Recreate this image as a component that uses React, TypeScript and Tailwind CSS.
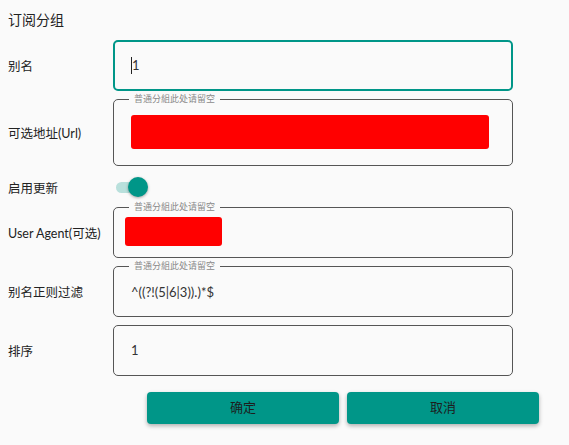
const font = { fontFamily: 'Lato, "Noto Sans CJK SC", sans-serif' };

const Legend = () => (
  <legend className="ml-[15px] px-[5px] text-[9px] leading-[10px] text-[#8a8a8a]">普通分組此处请留空</legend>
);

const Label: React.FC<{ text: string; shift?: boolean }> = ({ text, shift }) => (
  <div className={`w-[105px] shrink-0 text-[12.5px] text-[#222] ${shift ? "pt-[9px]" : "pt-[4px]"}`}>{text}</div>
);

export default function App() {
  return (
    <div className="min-h-[445px] w-[569px] bg-[#fafafa] px-2" style={font}>
      <div className="flex h-[38px] items-center text-[14px] text-[#222]">订阅分组</div>

      {/* 别名 */}
      <div className="mt-[2px] flex items-center">
        <Label text="别名" />
        <div className="flex h-[51px] w-[400px] items-center rounded-[5px] border-2 border-[#009688] pl-[16px] text-[13px] text-[#333]">
          <span className="inline-block h-[17px] border-l border-[#222]"></span>
          <span>1</span>
        </div>
      </div>

      {/* url */}
      <div className="mt-[3px] flex items-center">
        <Label text="可选地址(Url)" shift />
        <fieldset className="w-[400px] rounded-[5px] border border-[#555] pb-[16px]">
          <Legend />
          <div className="ml-[17px] mt-[11px] h-[34px] w-[358px] rounded-[3px] bg-[#ff0000]"></div>
        </fieldset>
      </div>

      {/* toggle */}
      <div className="mt-[6px] flex h-[30px] items-center">
        <Label text="启用更新" />
        <div className="relative ml-[3px] flex h-[20px] w-[32px] items-center">
          <div className="h-[11px] w-[30px] rounded-full bg-[#b9e0dc]"></div>
          <div className="absolute left-[12px] top-0 h-[20px] w-[20px] rounded-full bg-[#009688] shadow-[0_1px_3px_rgba(0,0,0,0.35)]"></div>
        </div>
      </div>

      {/* user agent */}
      <div className="flex items-center">
        <Label text="User Agent(可选)" shift />
        <fieldset className="w-[400px] rounded-[5px] border border-[#555] pb-[11px]">
          <Legend />
          <div className="ml-[11px] mt-[5px] h-[29px] w-[97px] rounded-[3px] bg-[#ff0000]"></div>
        </fieldset>
      </div>

      {/* regex */}
      <div className="mt-[3px] flex items-center">
        <Label text="别名正则过滤" shift />
        <fieldset className="w-[400px] rounded-[5px] border border-[#555] pb-[14px]">
          <Legend />
          <div className="ml-[17px] mt-[11px] h-[20px] text-[13px] leading-[20px] text-[#333]">^((?!(5|6|3)).)*$</div>
        </fieldset>
      </div>

      {/* sort */}
      <div className="mt-[8px] flex items-center">
        <Label text="排序" />
        <div className="flex h-[51px] w-[400px] items-center rounded-[5px] border border-[#555] pl-[17px] text-[13px] text-[#333]">
          1
        </div>
      </div>

      <div className="mt-[16px] flex gap-2 pl-[139px]">
        <button className="h-[32px] w-[192px] rounded-[4px] bg-[#009688] text-[13px] text-[#1d1d1d] shadow-[0_2px_4px_rgba(0,0,0,0.3)]">
          确定
        </button>
        <button className="h-[32px] w-[192px] rounded-[4px] bg-[#009688] text-[13px] text-[#1d1d1d] shadow-[0_2px_4px_rgba(0,0,0,0.3)]">
          取消
        </button>
      </div>
    </div>
  );
}
